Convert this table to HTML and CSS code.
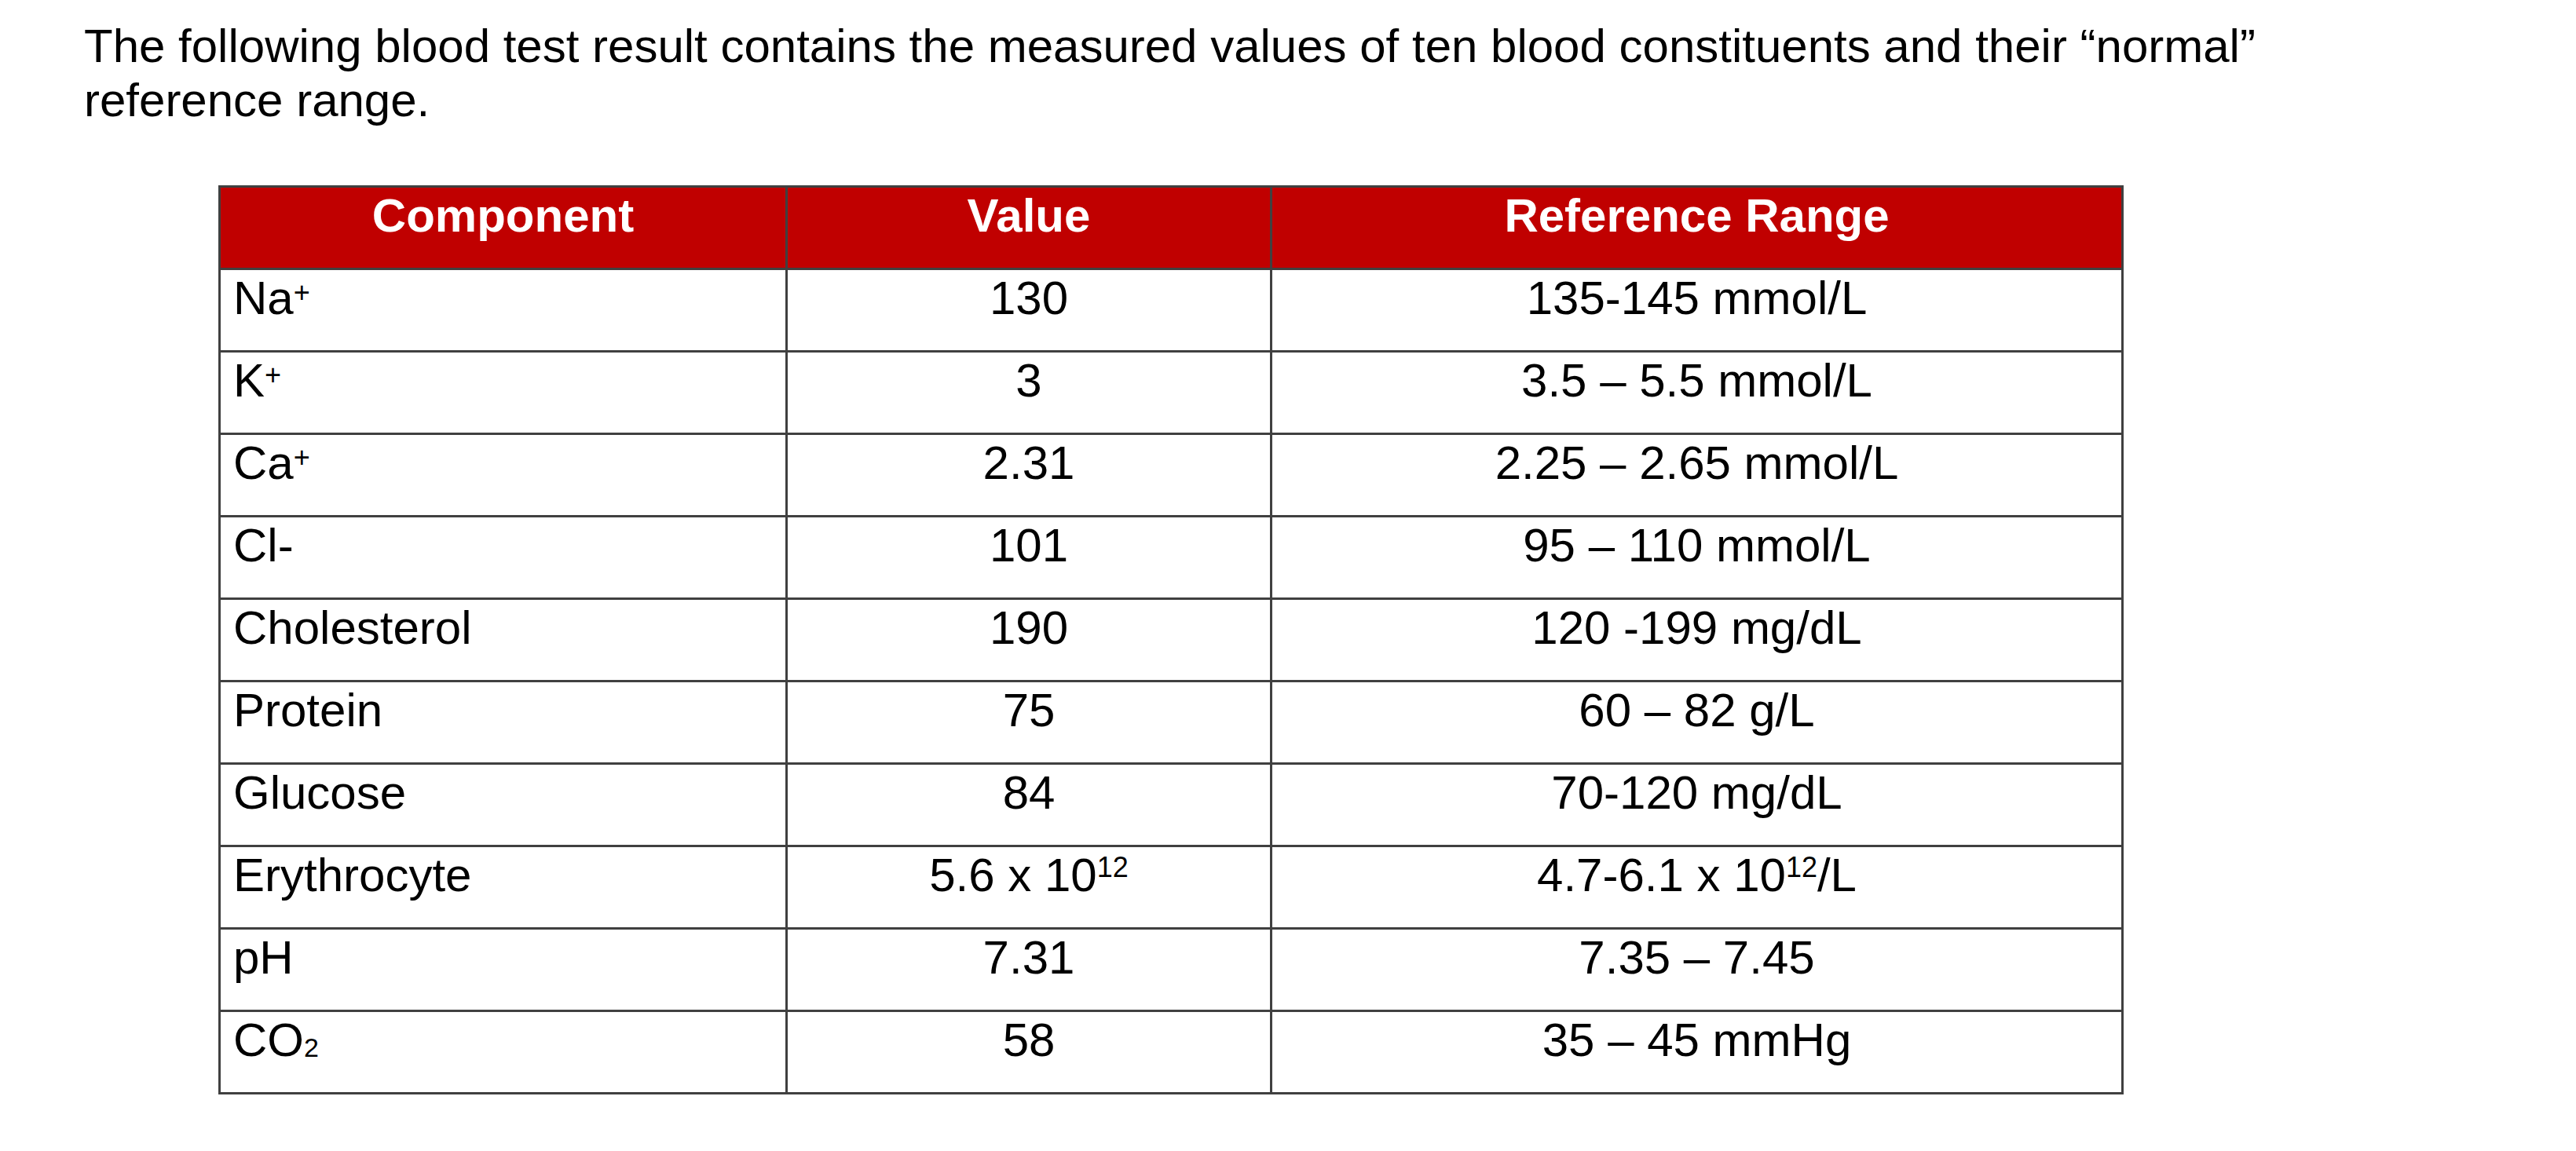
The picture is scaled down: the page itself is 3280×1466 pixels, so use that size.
FILE: index.html
```html
<!DOCTYPE html>
<html lang="en">
<head>
<meta charset="utf-8">
<title>Blood test result</title>
<link rel="stylesheet" href="styles.css">
</head>
<body>
<main class="page">
  <p class="intro">The following blood test result contains the measured values of ten blood constituents and their “normal” reference range.</p>
  <table class="results">
    <thead>
      <tr>
        <th class="col-comp">Component</th>
        <th class="col-val">Value</th>
        <th class="col-ref">Reference Range</th>
      </tr>
    </thead>
    <tbody>
      <tr><td class="name">Na<sup class="ion">+</sup></td><td>130</td><td>135-145 mmol/L</td></tr>
      <tr><td class="name">K<sup class="ion">+</sup></td><td>3</td><td>3.5 – 5.5 mmol/L</td></tr>
      <tr><td class="name">Ca<sup class="ion">+</sup></td><td>2.31</td><td>2.25 – 2.65 mmol/L</td></tr>
      <tr><td class="name">Cl-</td><td>101</td><td>95 – 110 mmol/L</td></tr>
      <tr><td class="name">Cholesterol</td><td>190</td><td>120 -199 mg/dL</td></tr>
      <tr><td class="name">Protein</td><td>75</td><td>60 – 82 g/L</td></tr>
      <tr><td class="name">Glucose</td><td>84</td><td>70-120 mg/dL</td></tr>
      <tr><td class="name">Erythrocyte</td><td>5.6 x 10<sup class="exp">12</sup></td><td>4.7-6.1 x 10<sup class="exp">12</sup>/L</td></tr>
      <tr><td class="name">pH</td><td>7.31</td><td>7.35 – 7.45</td></tr>
      <tr><td class="name">CO<sub class="sub">2</sub></td><td>58</td><td>35 – 45 mmHg</td></tr>
    </tbody>
  </table>
</main>
</body>
</html>
```
FILE: styles.css
```css
html, body {
  margin: 0;
  padding: 0;
  background: #ffffff;
}

body {
  font-family: "Liberation Sans", Arial, sans-serif;
  color: #000000;
  font-size: 60px;
  line-height: normal;
}

.page {
  padding: 24px 0 0 107px;
}

.intro {
  margin: 0;
  width: 2900px;
}

.results {
  margin: 74px 0 0 171px;
  border-collapse: separate;
  border-spacing: 0;
  border-top: 3px solid #404040;
  border-left: 3px solid #404040;
  table-layout: fixed;
  width: 2426px;
}

.results th,
.results td {
  border-right: 3px solid #404040;
  border-bottom: 3px solid #404040;
  padding: 1px 16px 0 16px;
  vertical-align: top;
  text-align: center;
  font-size: 60px;
  line-height: 69px;
  height: 101px;
}

.results th {
  background: #c00000;
  color: #ffffff;
  font-weight: bold;
  height: 101px;
}

.results td.name {
  text-align: left;
}

.col-comp { width: 687px; }
.col-val { width: 582px; }
.col-ref { width: 1049px; }

.ion,
.exp {
  font-size: 36px;
  line-height: 0;
}

.ion { vertical-align: 15px; }
.exp { vertical-align: 18px; }

.sub {
  font-size: 34px;
  line-height: 0;
  vertical-align: -1px;
}
```
